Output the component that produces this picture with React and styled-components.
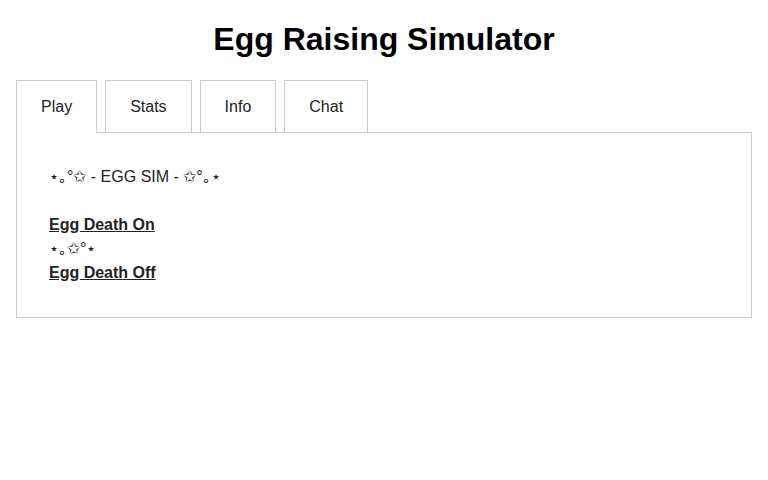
import React, { useState } from "react";
import styled, { createGlobalStyle } from "styled-components";

const GlobalStyle = createGlobalStyle`
  body {
    margin: 0;
    background: #fff;
    font-family: "Liberation Sans", Arial, sans-serif;
    color: #222;
  }
`;

const Page = styled.div`
  padding: 0 16px;
`;

const Title = styled.h1`
  margin: 0;
  padding: 21px 0 22px;
  font-size: 32px;
  line-height: 37px;
  font-weight: bold;
  text-align: center;
  color: #000;
`;

const TabList = styled.div`
  display: flex;
  gap: 8px;
  margin-bottom: -1px;
`;

const Tab = styled.button`
  position: relative;
  z-index: ${(p) => (p.$active ? 1 : 0)};
  padding: 17px 24px 16px;
  font: 16px/18px "Liberation Sans", Arial, sans-serif;
  color: #222;
  background: #fff;
  border: 1px solid #ccc;
  border-bottom-color: ${(p) => (p.$active ? "#fff" : "#ccc")};
  cursor: pointer;
`;

const Panel = styled.div`
  border: 1px solid #ccc;
  padding: 32px;
  font-size: 16px;
  line-height: 24px;
`;

const Intro = styled.p`
  margin: 0 0 24px;
`;

const Options = styled.div`
  display: flex;
  flex-direction: column;
  align-items: flex-start;
`;

const ToggleLink = styled.a`
  font-weight: bold;
  color: #222;
  text-decoration: underline;
  cursor: pointer;
`;

const Sparkle = styled.span`
  font-size: 16px;
`;

const tabs = ["Play", "Stats", "Info", "Chat"];

export default function App() {
  const [active, setActive] = useState("Play");

  return (
    <Page>
      <GlobalStyle />
      <Title>Egg Raising Simulator</Title>
      <TabList>
        {tabs.map((t) => (
          <Tab key={t} $active={t === active} onClick={() => setActive(t)}>
            {t}
          </Tab>
        ))}
      </TabList>
      <Panel>
        <Intro>⋆｡°✩ - EGG SIM - ✩°｡⋆</Intro>
        <Options>
          <ToggleLink>Egg Death On</ToggleLink>
          <Sparkle>⋆｡✩°⋆</Sparkle>
          <ToggleLink>Egg Death Off</ToggleLink>
        </Options>
      </Panel>
    </Page>
  );
}
